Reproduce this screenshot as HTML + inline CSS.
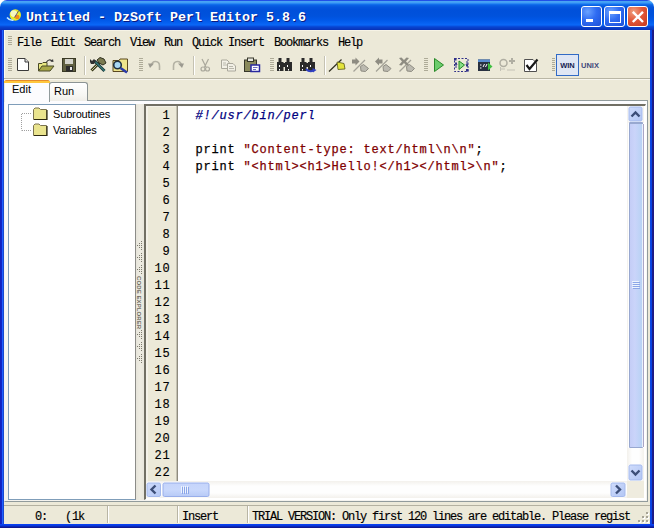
<!DOCTYPE html>
<html><head><meta charset="utf-8">
<style>
*{margin:0;padding:0;box-sizing:border-box}
html,body{width:654px;height:528px;overflow:hidden;background:#fff}
body{position:relative;font-family:"Liberation Sans",sans-serif}
.a{position:absolute}
.mono{font-family:"Liberation Mono",monospace}
#title{left:0;top:0;width:654px;height:30px;border-radius:7px 7px 0 0;
background:linear-gradient(to bottom,#2050e8 0px,#2050e8 1px,#48a4f4 1px,#48a4f4 2px,#3c98f6 3px,#1878f0 4px,#0a64e6 5px,#0556de 7px,#0050da 10px,#0052dc 16px,#0058e8 20px,#0864f4 24px,#0a68f8 25px,#0852e2 26px,#0844d0 27px,#0838c0 29px,#0830b4 30px)}
#lframe{left:0;top:30px;width:4px;height:498px;background:linear-gradient(to right,#1020c0 0,#1028c8 2px,#2060ff 2px,#2060ff 3px,#1848d0 3px)}
#rframe{left:650px;top:30px;width:4px;height:498px;background:linear-gradient(to right,#0a48e8 0,#0840e0 2px,#1a1e90 2px,#201880 4px)}
#bframe{left:0;top:524px;width:654px;height:4px;background:linear-gradient(to bottom,#0840f0 0,#0840f0 1px,#0838e0 1px,#0838e0 2px,#0828b8 2px,#0828b8 3px,#101890 3px)}
#client{left:4px;top:30px;width:646px;height:494px;background:#ece9d8}
.ttext{font-family:"Liberation Mono",monospace;font-weight:bold;font-size:13.33px;color:#fff;text-shadow:1px 1px 0 #0a1a80;white-space:pre}
.tbtn{top:6px;width:21px;height:21px;border:1px solid #fff;border-radius:3px;
background:radial-gradient(circle at 30% 25%,#6aa2ff 0%,#2f6cf2 45%,#1c50d8 100%)}
.tbtn.close{background:radial-gradient(circle at 30% 25%,#f0a080 0%,#e2583a 45%,#c4381c 100%)}
.sj{font-family:"Liberation Mono",monospace;font-size:12px;letter-spacing:-1.2px;white-space:pre;color:#000;-webkit-text-stroke:0.15px #000}
.grip{width:3px;background:repeating-linear-gradient(to bottom,#aeab98 0,#aeab98 1px,transparent 1px,transparent 2px)}
.sep{width:2px;height:20px;top:55px;border-left:1px solid #c5c2b2;border-right:1px solid #fff}
</style></head><body>
<div id="title" class="a"></div>
<div id="client" class="a"></div>
<div id="lframe" class="a"></div>
<div id="rframe" class="a"></div>
<div id="bframe" class="a"></div>

<!-- title -->
<svg class="a" style="left:0;top:0" width="30" height="30" viewBox="0 0 30 30">
<circle cx="15.3" cy="15" r="5.7" fill="#e4ec28"/>
<circle cx="13.8" cy="13.6" r="3.4" fill="#f4f8c0"/>
<circle cx="17.2" cy="17" r="2.3" fill="#f08a1c"/>
<path d="M18.8 10.5 L14.5 17.5" stroke="#5a4868" stroke-width="0.9"/>
<path d="M7 17.5 Q9.5 20.8 13.5 20.2" fill="none" stroke="#c4e8ff" stroke-width="1.6"/>
</svg>
<div class="a ttext" style="left:26px;top:10px">Untitled - DzSoft Perl Editor 5.8.6</div>
<div class="a tbtn" style="left:581px">
  <div class="a" style="left:4px;top:12px;width:7px;height:3px;background:#fff"></div>
</div>
<div class="a tbtn" style="left:604px">
  <div class="a" style="left:4px;top:4px;width:12px;height:12px;border:1px solid #fff;border-top-width:3px"></div>
</div>
<div class="a tbtn close" style="left:627px">
  <svg class="a" style="left:0;top:0" width="19" height="19" viewBox="0 0 19 19"><path d="M4.8 4.8 L15 15 M15 4.8 L4.8 15" stroke="#fff" stroke-width="2.4"/></svg>
</div>


<!-- menu bar -->
<div class="a" style="left:4px;top:30px;width:646px;height:1px;background:#f6f3e6"></div>
<div class="a grip" style="left:8px;top:36px;height:10px;width:4px"></div>
<div class="a sj" style="left:17px;top:36px">File</div>
<div class="a sj" style="left:51px;top:36px">Edit</div>
<div class="a sj" style="left:84px;top:36px">Search</div>
<div class="a sj" style="left:130px;top:36px">View</div>
<div class="a sj" style="left:164px;top:36px">Run</div>
<div class="a sj" style="left:192px;top:36px">Quick Insert</div>
<div class="a sj" style="left:274px;top:36px">Bookmarks</div>
<div class="a sj" style="left:338px;top:36px">Help</div>
<!-- toolbar -->
<div class="a" style="left:4px;top:78px;width:646px;height:1px;background:#b9b6a5"></div>
<div class="a" style="left:4px;top:79px;width:646px;height:1px;background:#f8f6ee"></div>
<div class="a" style="left:4px;top:30px;width:1px;height:48px;background:#fbfaf4"></div>

<svg class="a" style="left:0;top:0" width="654" height="80" viewBox="0 0 654 80">
<defs>
<pattern id="gp" width="4" height="2" patternUnits="userSpaceOnUse"><rect width="4" height="1" fill="#aeab98"/></pattern>
</defs>
<!-- grips -->
<rect x="8" y="58" width="4" height="14" fill="url(#gp)"/>
<rect x="139" y="58" width="4" height="14" fill="url(#gp)"/>
<rect x="270" y="58" width="4" height="14" fill="url(#gp)"/>
<rect x="424" y="58" width="4" height="14" fill="url(#gp)"/>
<rect x="552" y="58" width="3" height="14" fill="url(#gp)"/>
<!-- separators -->
<g fill="#c5c2b2"><rect x="84" y="56" width="1" height="19"/><rect x="193" y="56" width="1" height="19"/><rect x="324" y="56" width="1" height="19"/></g>
<g fill="#fff"><rect x="85" y="56" width="1" height="19"/><rect x="194" y="56" width="1" height="19"/><rect x="325" y="56" width="1" height="19"/></g>
<!-- new -->
<path d="M17.5 58.5 H25 L28.5 62 V70.5 H17.5 Z" fill="#fff" stroke="#3a3a3a"/>
<path d="M25 58.5 V62 H28.5" fill="#ddd" stroke="#3a3a3a"/>
<!-- open -->
<path d="M38.5 71 V63.5 H42 L43 62.5 H47 V66" fill="#e8e880" stroke="#4a4a28"/>
<path d="M38.5 71 L42 66 H54 L50 71 Z" fill="#a8a848" stroke="#4a4a28"/>
<path d="M46.5 62 Q49 58.5 52 61" fill="none" stroke="#3a3a3a" stroke-width="1.2"/>
<path d="M50.5 61.5 L53.5 62 L53 59 Z" fill="#3a3a3a"/>
<!-- save -->
<rect x="62.5" y="58.5" width="13" height="13" fill="#606040" stroke="#3a3a26"/>
<rect x="65" y="59" width="8" height="5" fill="#d4d4cc"/>
<rect x="66" y="66" width="7" height="5.5" fill="#2c2c2c"/>
<rect x="70" y="67" width="2" height="3" fill="#e8e8e8"/>
<!-- tools -->
<path d="M91.5 70.5 L100 62" stroke="#38381c" stroke-width="3"/>
<path d="M91.5 70.5 L100 62" stroke="#c8c890" stroke-width="1"/>
<path d="M97 60 L100 57.5 L104 59 L106 63 L103 65 L99 63 Z" fill="#7a7a50" stroke="#303020"/>
<path d="M104.5 71 L94.5 61" stroke="#1a3a3a" stroke-width="3"/>
<path d="M104.5 71 L94.5 61" stroke="#48a0a0" stroke-width="1"/>
<path d="M90 59 L92 61 L94 59 L96 61 L94 64 L91 64 L90 62 Z" fill="#303030"/>
<!-- search folder -->
<path d="M113 71.5 V60.5 H119 L120 59 H127.5 V71.5 Z" fill="#eee48c" stroke="#5a4820"/>
<circle cx="117.5" cy="65" r="3.8" fill="#a8d8f4" stroke="#203040" stroke-width="1.6"/>
<path d="M120.5 68 L127 72.5" stroke="#2a3aa8" stroke-width="2.6"/>
<!-- undo/redo disabled -->
<path d="M151.5 65.5 C152 60 159.5 60 159.5 66 V70" fill="none" stroke="#b4b2a4" stroke-width="1.6"/>
<path d="M148 63.5 L154 63.5 L150 68 Z" fill="#9c9a90"/>
<path d="M181.5 65.5 C181 60 173.5 60 173.5 66 V70" fill="none" stroke="#b4b2a4" stroke-width="1.6"/>
<path d="M184 63.5 L178 63.5 L182 68 Z" fill="#9c9a90"/>
<!-- cut -->
<g stroke="#aaa89c" fill="none" stroke-width="1.2">
<path d="M202 59 L206 67 M208.5 59 L204.5 67"/>
<circle cx="203" cy="69" r="2"/><circle cx="207.5" cy="69" r="2"/>
</g>
<!-- copy -->
<g stroke="#aaa89c" fill="#f2f0e6" stroke-width="1">
<path d="M221.5 60 H227 L229 62 V68.5 H221.5 Z"/>
<path d="M227.5 63.5 H233 L235.5 66 V71 H227.5 Z"/>
<path d="M229 66.5 H233 M229 68.5 H234 M223 63 H226 M223 65 H227" stroke-width="0.8"/>
</g>
<!-- paste -->
<rect x="244.5" y="60" width="12" height="11.5" fill="#8a8a5c" stroke="#36362a"/>
<rect x="247.5" y="58" width="6" height="3.5" fill="#e8e8e0" stroke="#36362a"/>
<rect x="251" y="65" width="8.5" height="6.5" fill="#fff" stroke="#2828a0" stroke-width="1.5"/>
<path d="M253 67.5 H257.5 M253 69.5 H256" stroke="#4848b0" stroke-width="0.8"/>
<!-- binoculars -->
<g fill="#2a2a2a">
<rect x="278.5" y="58" width="3" height="5"/><rect x="286.5" y="58" width="3" height="5"/>
<rect x="277" y="62" width="6.5" height="9"/><rect x="285" y="62" width="7" height="9"/>
<rect x="283" y="63" width="2" height="4"/>
<rect x="300" y="62" width="6.5" height="9"/><rect x="308" y="62" width="7" height="9"/>
<rect x="301.5" y="58" width="3" height="5"/><rect x="309.5" y="58" width="3" height="5"/>
<rect x="306" y="63" width="2" height="4"/>
</g>
<g fill="#fff"><rect x="279" y="65" width="1" height="2"/><rect x="287" y="65" width="1" height="2"/><rect x="279" y="69" width="1" height="1.5"/><rect x="288" y="69" width="1" height="1.5"/>
<rect x="302" y="65" width="1" height="2"/><rect x="310" y="65" width="1" height="2"/><rect x="302" y="69" width="1" height="1.5"/></g>
<path d="M306 69 Q310 73 314 70" fill="none" stroke="#3040c0" stroke-width="2"/>
<path d="M312.5 68 L316.5 70 L313 72.5 Z" fill="#3040c0"/>
<!-- bookmark toggle -->
<path d="M329 71.5 L341.5 59.5" stroke="#303020" stroke-width="1.2"/>
<path d="M337 62 L344 63.5 L345 69 L338 69.5 Z" fill="#e4e43c" stroke="#585818" stroke-width="0.8"/>
<!-- next/prev/clear disabled -->
<g stroke="#a4a298" fill="none" stroke-width="1.3">
<path d="M353.5 71.5 L365 60"/><path d="M376 71.5 L387.5 60"/><path d="M399.5 71.5 L411 60"/>
</g>
<g fill="#bcbab0" stroke="#8e8c82" stroke-width="1">
<path d="M360.5 66.5 L363.5 64.5 L368.5 68.5 L365.5 71.5 L361 71 Z"/>
<path d="M383 66.5 L386 64.5 L391 68.5 L388 71.5 L383.5 71 Z"/>
<path d="M406.5 66.5 L409.5 64.5 L414.5 68.5 L411.5 71.5 L407 71 Z"/>
</g>
<g fill="#8e8c82">
<path d="M352 59.5 H355.5 V57.5 L359.5 61.5 L355.5 65.5 V63.5 H352 Z"/>
<path d="M382.5 59.5 H379 V57.5 L375 61.5 L379 65.5 V63.5 H382.5 Z"/>
<path d="M399 58 L401.5 57.5 L404 60 L406.5 57.5 L409 58 L406 61.5 L409 65 L406.5 65.5 L404 63 L401.5 65.5 L399 65 L402 61.5 Z"/>
</g>
<!-- run -->
<path d="M434.5 58.5 L443.5 65 L434.5 71.5 Z" fill="#6ccc6c" stroke="#2a8a2a"/>
<!-- run sel -->
<rect x="454.5" y="58.5" width="13.5" height="13" fill="none" stroke="#30308a" stroke-dasharray="2,1.5"/>
<rect x="454" y="58" width="2.5" height="2.5" fill="#30308a"/><rect x="466" y="69" width="2.5" height="2.5" fill="#30308a"/>
<path d="M459 61 L464.5 65 L459 69.5 Z" fill="#88dd88" stroke="#208a20"/>
<path d="M456 68 V63 M455 64.5 L456 62.5 L457 64.5 M467 61 V66 M466 64.5 L467 66.5 L468 64.5" stroke="#30308a" stroke-width="1"/>
<!-- console -->
<rect x="478" y="59.5" width="12" height="11.5" fill="#283040"/>
<rect x="478" y="59.5" width="12" height="2.5" fill="#5a8ed0"/>
<path d="M480 65 h1.5 M480 68 h1.5 M483 67 l1.5 -3 M485.5 67 l1.5 -3" stroke="#fff" stroke-width="1"/>
<path d="M488 62.5 L492.5 66.5 L488 70.5 Z" fill="#40c040"/>
<!-- disabled @+ -->
<circle cx="503.5" cy="63" r="3.5" fill="none" stroke="#b0aea2" stroke-width="1.5"/>
<path d="M512 58 V64 M509 61 H515" stroke="#b0aea2" stroke-width="2"/>
<path d="M500.5 67 V71 M500.5 69 H505 M507 70 h8" stroke="#c4c2b6" stroke-width="1"/>
<!-- check -->
<path d="M524.5 59.5 H533 L536.5 63 V71.5 H524.5 Z" fill="#fff" stroke="#505050"/>
<path d="M526.5 65 L529.5 69 L537.5 59.5" fill="none" stroke="#181818" stroke-width="2.2"/>
<!-- WIN button -->
<rect x="556.5" y="54.5" width="22" height="21" fill="#dfe6f4" stroke="#316ac5"/>
<text x="567.5" y="68" text-anchor="middle" font-family="Liberation Sans" font-weight="bold" font-size="7.5" fill="#141c50">WIN</text>
<text x="590" y="68" text-anchor="middle" font-family="Liberation Sans" font-weight="bold" font-size="7.5" fill="#40487a">UNIX</text>
</svg>

<!-- tab page -->
<div class="a" style="left:4px;top:100px;width:644px;height:402px;border:1px solid #919b9c;border-left-color:#f4f4f0;background:linear-gradient(to bottom,#fcfcfe,#f4f3ee)"></div>
<!-- inactive tab Run -->
<div class="a" style="left:49px;top:82px;width:39px;height:19px;border:1px solid #8c9494;border-bottom:none;border-radius:3px 3px 0 0;background:linear-gradient(to bottom,#fff,#f6f6f2 70%,#efeee8)"></div>
<div class="a" style="left:54px;top:85px;font-size:11px;color:#000">Run</div>
<!-- active tab Edit -->
<div class="a" style="left:4px;top:80px;width:46px;height:22px;border:1px solid #919b9c;border-left-color:#e8e8e4;border-top:none;border-bottom:none;border-radius:3px 3px 0 0;background:#fcfcfe"></div>
<div class="a" style="left:5px;top:80px;width:44px;height:1px;background:#e68b2c;border-radius:2px 2px 0 0"></div>
<div class="a" style="left:4px;top:81px;width:46px;height:2px;background:#ffc73c"></div>
<div class="a" style="left:12px;top:83px;font-size:11px;color:#000">Edit</div>

<!-- tree panel -->
<div class="a" style="left:8px;top:104px;width:128px;height:396px;border:1px solid #7f9db9;border-right-color:#8c8c88;background:#fff"></div>
<svg class="a" style="left:0;top:0" width="140" height="140" viewBox="0 0 140 140">
<path d="M21.5 114 V130.5 M22 113.5 H32 M22 130.5 H32" stroke="#a0a0a0" stroke-width="1" stroke-dasharray="1,1"/>
<g>
<path d="M33.5 119.5 V109.5 L35 108 H39 L40.5 109.5 H46.5 V119.5 Z" fill="#eae48e" stroke="#7c7450" stroke-width="1"/>
<path d="M34 119.5 H47 V110" fill="none" stroke="#2e2a10" stroke-width="1.2"/>
<path d="M33.5 135.5 V125.5 L35 124 H39 L40.5 125.5 H46.5 V135.5 Z" fill="#eae48e" stroke="#7c7450" stroke-width="1"/>
<path d="M34 135.5 H47 V126" fill="none" stroke="#2e2a10" stroke-width="1.2"/>
</g>
</svg>
<div class="a" style="left:53px;top:108px;font-size:11px;letter-spacing:-0.15px;color:#000">Subroutines</div>
<div class="a" style="left:53px;top:124px;font-size:11px;letter-spacing:-0.15px;color:#000">Variables</div>

<!-- splitter -->
<div class="a" style="left:136px;top:104px;width:8px;height:396px;background:linear-gradient(to right,#e6e4da,#eeece2 50%,#e8e6dc)"></div>

<!-- editor -->
<div class="a" style="left:144px;top:104px;width:502px;height:396px;border-top:2px solid #716f64;border-left:2px solid #716f64;border-right:1px solid #fff;border-bottom:1px solid #fff;background:#fff"></div>
<div class="a" style="left:146px;top:106px;width:30px;height:375px;background:#ece9d8;border-left:2px solid #f3f1e8;border-top:1px solid #f3f1e8"></div>
<div class="a" style="left:176px;top:106px;width:1px;height:375px;background:#c4c1b2"></div><div class="a" style="left:177px;top:106px;width:1px;height:375px;background:#8e8b7e"></div>

<div class="a mono" style="left:146.5px;top:108px;width:24px;font-size:12px;letter-spacing:0.8px;line-height:17px;text-align:right;color:#000;-webkit-text-stroke:0.15px"><div>1</div><div>2</div><div>3</div><div>4</div><div>5</div><div>6</div><div>7</div><div>8</div><div>9</div><div>10</div><div>11</div><div>12</div><div>13</div><div>14</div><div>15</div><div>16</div><div>17</div><div>18</div><div>19</div><div>20</div><div>21</div><div>22</div></div>
<div class="a mono" style="left:195.5px;top:108px;font-size:12px;letter-spacing:0.8px;line-height:17px;white-space:pre;color:#000;-webkit-text-stroke:0.25px"><span style="color:#000080;font-style:italic">#!/usr/bin/perl</span>

print <span style="color:#800000">"Content-type: text/html\n\n"</span>;
print <span style="color:#800000">"&lt;html&gt;&lt;h1&gt;Hello!&lt;/h1&gt;&lt;/html&gt;\n"</span>;</div>

<!-- vertical scrollbar -->
<div class="a" style="left:627px;top:106px;width:17px;height:375px;background:linear-gradient(to right,#f3f1ec,#fefefe 30%,#fefefe 70%,#f3f1ec)"></div>
<svg class="a" style="left:0;top:0" width="654" height="528" viewBox="0 0 654 528">
<defs>
<linearGradient id="bv" x1="0" y1="0" x2="1" y2="1"><stop offset="0" stop-color="#d0dcfc"/><stop offset="1" stop-color="#b2c6f4"/></linearGradient>
<linearGradient id="th" x1="0" y1="0" x2="1" y2="0"><stop offset="0" stop-color="#c4cdf6"/><stop offset="0.4" stop-color="#cad4fa"/><stop offset="1" stop-color="#b8d2f4"/></linearGradient>
<linearGradient id="thh" x1="0" y1="0" x2="0" y2="1"><stop offset="0" stop-color="#c6d5fb"/><stop offset="0.5" stop-color="#c9d8fc"/><stop offset="1" stop-color="#b6c9f6"/></linearGradient>
</defs>
<!-- up button -->
<rect x="628.5" y="106.5" width="14" height="15" rx="2" fill="url(#bv)" stroke="#fff"/>
<rect x="629" y="107" width="13" height="14" rx="1.5" fill="none" stroke="#a4b9ec" stroke-width="1"/>
<path d="M631.5 116.5 L635.5 112.5 L639.5 116.5" fill="none" stroke="#3c4e78" stroke-width="2.4"/>
<!-- thumb -->
<rect x="628" y="123" width="16" height="325" fill="#fff"/>
<rect x="629" y="122" width="14" height="326" rx="1" fill="#98a8d0"/>
<rect x="630" y="124" width="12" height="323" fill="url(#th)"/>
<rect x="642" y="124" width="1" height="323" fill="#eaf0fc"/>
<rect x="643" y="124" width="1" height="323" fill="#aaa6c6"/>
<g fill="#eef4fe"><rect x="632" y="281" width="7" height="1"/><rect x="632" y="283" width="7" height="1"/><rect x="632" y="285" width="7" height="1"/><rect x="632" y="287" width="7" height="1"/></g>
<g fill="#8ca6e8"><rect x="633" y="282" width="7" height="1"/><rect x="633" y="284" width="7" height="1"/><rect x="633" y="286" width="7" height="1"/><rect x="633" y="288" width="7" height="1"/></g>
<!-- down button -->
<rect x="628.5" y="464.5" width="14" height="16" rx="2" fill="url(#bv)" stroke="#fff"/>
<rect x="629" y="465" width="13" height="15" rx="1.5" fill="none" stroke="#a4b9ec" stroke-width="1"/>
<path d="M631.5 470.5 L635.5 474.5 L639.5 470.5" fill="none" stroke="#3c4e78" stroke-width="2.4"/>
</svg>
<!-- horizontal scrollbar -->
<div class="a" style="left:146px;top:481px;width:481px;height:17px;background:linear-gradient(to bottom,#f3f1ec,#fefefe 30%,#fefefe 70%,#f3f1ec)"></div>
<div class="a" style="left:627px;top:481px;width:17px;height:17px;background:#efecdf"></div>
<svg class="a" style="left:0;top:0" width="654" height="528" viewBox="0 0 654 528">
<rect x="146.5" y="482.5" width="14.5" height="14.5" rx="2" fill="url(#bv)" stroke="#fff"/>
<rect x="147" y="483" width="13.5" height="13.5" rx="1.5" fill="none" stroke="#a4b9ec" stroke-width="1"/>
<path d="M155.5 485.5 L151.5 489.5 L155.5 493.5" fill="none" stroke="#3c4e78" stroke-width="2.4"/>
<rect x="162.5" y="482.5" width="47" height="14.5" rx="2" fill="url(#thh)" stroke="#fff"/>
<rect x="163" y="483" width="46" height="13.5" rx="1.5" fill="none" stroke="#98aeea" stroke-width="1"/>
<g fill="#eef4fe"><rect x="181" y="486" width="1" height="7"/><rect x="183" y="486" width="1" height="7"/><rect x="185" y="486" width="1" height="7"/><rect x="187" y="486" width="1" height="7"/></g>
<g fill="#8ca6e8"><rect x="182" y="487" width="1" height="7"/><rect x="184" y="487" width="1" height="7"/><rect x="186" y="487" width="1" height="7"/><rect x="188" y="487" width="1" height="7"/></g>
<rect x="610.5" y="482.5" width="15" height="14.5" rx="2" fill="url(#bv)" stroke="#fff"/>
<rect x="611" y="483" width="14" height="13.5" rx="1.5" fill="none" stroke="#a4b9ec" stroke-width="1"/>
<path d="M616 485.5 L620 489.5 L616 493.5" fill="none" stroke="#3c4e78" stroke-width="2.4"/>
</svg>

<!-- splitter label -->
<svg class="a" style="left:0;top:0" width="654" height="528" viewBox="0 0 654 528">
<defs><pattern id="dots" width="2" height="2" patternUnits="userSpaceOnUse"><rect width="1" height="1" fill="#8a887c"/></pattern></defs>
<g fill="#7c7a6e"><rect x="141" y="241" width="1" height="1"/><rect x="141" y="243" width="1" height="1"/><rect x="141" y="245" width="1" height="1"/><rect x="141" y="247" width="1" height="1"/><rect x="141" y="249" width="1" height="1"/><rect x="139" y="243" width="1" height="1"/><rect x="139" y="245" width="1" height="1"/><rect x="139" y="247" width="1" height="1"/><rect x="137" y="245" width="1" height="1"/><rect x="141" y="253" width="1" height="1"/><rect x="141" y="255" width="1" height="1"/><rect x="141" y="257" width="1" height="1"/><rect x="141" y="259" width="1" height="1"/><rect x="141" y="261" width="1" height="1"/><rect x="139" y="255" width="1" height="1"/><rect x="139" y="257" width="1" height="1"/><rect x="139" y="259" width="1" height="1"/><rect x="137" y="257" width="1" height="1"/><rect x="141" y="265" width="1" height="1"/><rect x="141" y="267" width="1" height="1"/><rect x="141" y="269" width="1" height="1"/><rect x="141" y="271" width="1" height="1"/><rect x="141" y="273" width="1" height="1"/><rect x="139" y="267" width="1" height="1"/><rect x="139" y="269" width="1" height="1"/><rect x="139" y="271" width="1" height="1"/><rect x="137" y="269" width="1" height="1"/><rect x="141" y="330" width="1" height="1"/><rect x="141" y="332" width="1" height="1"/><rect x="141" y="334" width="1" height="1"/><rect x="141" y="336" width="1" height="1"/><rect x="141" y="338" width="1" height="1"/><rect x="139" y="332" width="1" height="1"/><rect x="139" y="334" width="1" height="1"/><rect x="139" y="336" width="1" height="1"/><rect x="137" y="334" width="1" height="1"/><rect x="141" y="342" width="1" height="1"/><rect x="141" y="344" width="1" height="1"/><rect x="141" y="346" width="1" height="1"/><rect x="141" y="348" width="1" height="1"/><rect x="141" y="350" width="1" height="1"/><rect x="139" y="344" width="1" height="1"/><rect x="139" y="346" width="1" height="1"/><rect x="139" y="348" width="1" height="1"/><rect x="137" y="346" width="1" height="1"/><rect x="141" y="354" width="1" height="1"/><rect x="141" y="356" width="1" height="1"/><rect x="141" y="358" width="1" height="1"/><rect x="141" y="360" width="1" height="1"/><rect x="141" y="362" width="1" height="1"/><rect x="139" y="356" width="1" height="1"/><rect x="139" y="358" width="1" height="1"/><rect x="139" y="360" width="1" height="1"/><rect x="137" y="358" width="1" height="1"/></g>
<text transform="translate(137,276) rotate(90)" font-family="Liberation Sans" font-size="6px" font-weight="bold" fill="#6e6c62" letter-spacing="0.1">CODE EXPLORER</text>
</svg>

<!-- status bar -->
<div class="a" style="left:4px;top:505px;width:646px;height:1px;background:#b4b1a0"></div>
<div class="a" style="left:107px;top:506px;width:1px;height:17px;background:#b8b5a4"></div><div class="a" style="left:108px;top:506px;width:1px;height:17px;background:#fff"></div>
<div class="a" style="left:177px;top:506px;width:1px;height:17px;background:#b8b5a4"></div><div class="a" style="left:178px;top:506px;width:1px;height:17px;background:#fff"></div>
<div class="a" style="left:247px;top:506px;width:1px;height:17px;background:#b8b5a4"></div><div class="a" style="left:248px;top:506px;width:1px;height:17px;background:#fff"></div>
<div class="a sj" style="left:35px;top:510px">0:</div>
<div class="a sj" style="left:65px;top:510px">(</div><div class="a sj" style="left:72px;top:510px">1k</div>
<div class="a sj" style="left:182px;top:510px">Insert</div>
<div class="a sj" style="left:252px;top:510px">TRIAL VERSION: Only first 120 lines are editable. Please regist</div>
<svg class="a" style="left:0;top:0" width="654" height="528" viewBox="0 0 654 528">
<g fill="#fff"><rect x="647" y="513" width="2" height="2"/><rect x="643" y="517" width="2" height="2"/><rect x="647" y="517" width="2" height="2"/><rect x="639" y="521" width="2" height="2"/><rect x="643" y="521" width="2" height="2"/><rect x="647" y="521" width="2" height="2"/></g>
<g fill="#a6a394"><rect x="646" y="512" width="2" height="2"/><rect x="642" y="516" width="2" height="2"/><rect x="646" y="516" width="2" height="2"/><rect x="638" y="520" width="2" height="2"/><rect x="642" y="520" width="2" height="2"/><rect x="646" y="520" width="2" height="2"/></g>
</svg>
</body></html>
